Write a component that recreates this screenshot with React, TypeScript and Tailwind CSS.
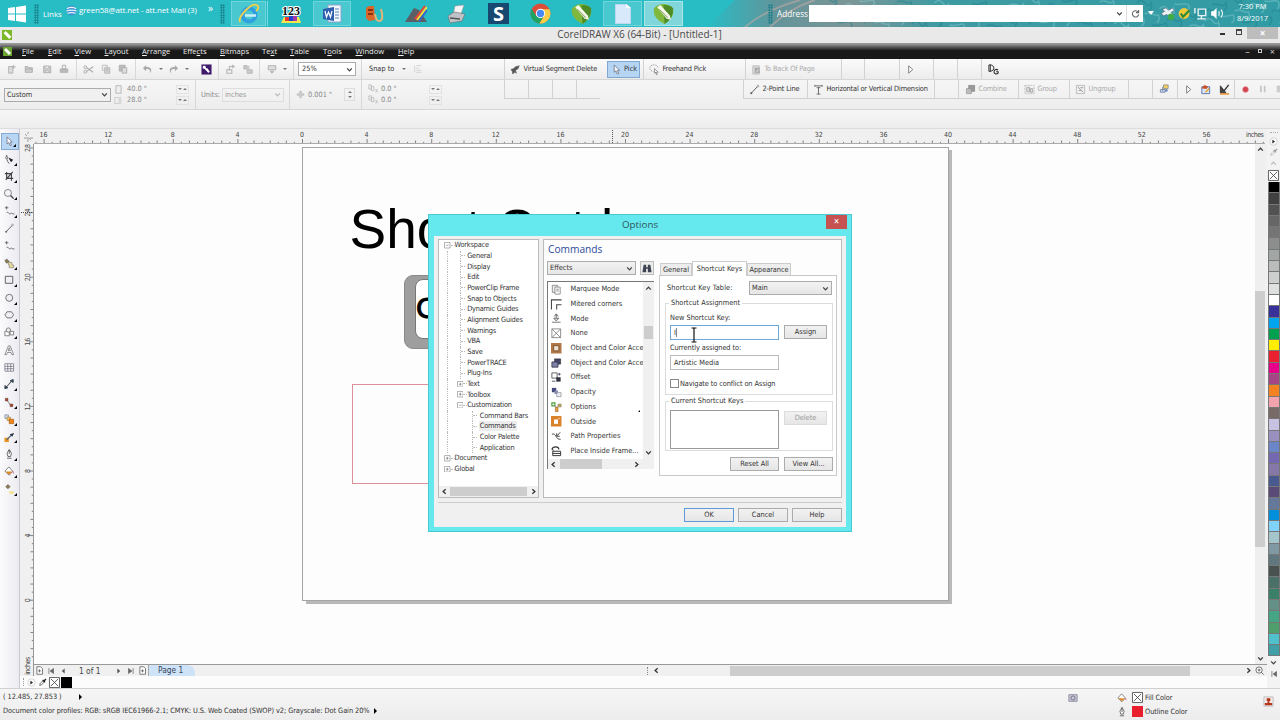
import React from 'react';
import { clsx } from 'clsx';

type Glyphs = Record<string, React.ReactNode>;

const gray = '#a9a9a9';

// All glyphs share a 12x12 box
const glyphs: Glyphs = {
  new: <><path d="M2 3h5v8H2z" fill="#ddd" stroke={gray} /><path d="M8 1v5M5.500 3.500h5" stroke={gray} /></>,
  open: <path d="M1.500 10V3h3l1 1.500H10V10zM2 6h8" fill="#ccc" stroke={gray} />,
  save: <><path d="M2 2.500h8.500v8H2z" fill="#ccc" stroke={gray} /><path d="M4 2.500h4v3H4zM4 8h4v2H4z" fill="#eee" stroke="#bbb" /></>,
  print: <><path d="M4 1.500h4V6H4z" fill="#eee" stroke={gray} /><path d="M1.500 6h9v4h-9z" fill="#bbb" stroke={gray} /></>,
  cut: <><path d="M4 4l7 5M4 8l7-5" stroke={gray} strokeWidth="1.200" /><circle cx="2.500" cy="3.500" r="1.600" fill="none" stroke={gray} /><circle cx="2.500" cy="8.500" r="1.600" fill="none" stroke={gray} /></>,
  copy: <><path d="M1.500 1.500h6v6h-6z" fill="#eee" stroke="#bbb" /><path d="M4.500 4.500h6v6.500h-6zM6 6.500h3M6 8.500h3" fill="#ddd" stroke={gray} /></>,
  paste: <><path d="M1.500 1.500h7v7h-7z" fill="#bbb" stroke={gray} /><path d="M5 4.500h5.500V11H5z" fill="#ddd" stroke={gray} /></>,
  undo: <path d="M4.500 1L1 4.500 4.500 8V5.500c3-.5 5 .5 4 4.500 3.500-4 1-7-4-6.800z" fill="#aaa" />,
  redo: <path d="M7.500 1L11 4.500 7.500 8V5.500c-3-.5-5 .5-4 4.500C0 6 2.500 3 7.500 3.200z" fill="#aaa" />,
  connect: <><path d="M.5.500h11v11H.5z" fill="#3f1a6b" /><path d="M3 3l5.500 6M6 5l3 4" stroke="#fff" strokeWidth="1.800" /><path d="M2 2h3v3H2z" fill="#fff" /></>,
  import: <path d="M1 7h6v4H1zM4 7V3h5M7 1l3 2-3 2" fill="none" stroke="#b5b5b5" strokeWidth="1.300" />,
  export: <path d="M5 7h6v4H5zM1 2h4v4H1zM7 6V2" fill="#ccc" stroke="#b5b5b5" strokeWidth="1.200" />,
  publish: <path d="M1.500 2h9v5h-9zM6 7v4M3.500 8.500L6 11l2.500-2.500" fill="#ddd" stroke={gray} />,
  lines: <path d="M2 2v8M4 2h6M4 5h3M4 7.500h6M4 10h6" stroke="#ccc" />,
  vsd: <path d="M1 6l3-1 2-2 4-1-1 3-3 2 1 3-2-1-2 2-.5-3zM7 5l3-3" fill="#555" stroke="#666" strokeWidth=".7" />,
  pick: <path d="M3.500 1l6 6H7l1.500 3.500-1.500.5L5.500 7.500 3.500 9z" fill="#f5f8fc" stroke="#667" strokeWidth=".8" />,
  freehand: <><path d="M6 5l4 4H8l1 2.500H8L7 9l-1 1z" fill="#fff" stroke="#666" strokeWidth=".7" /><path d="M1 4c0-4 8-4 9 0M1 5c0 2 2 3 4 3" fill="none" stroke="#999" strokeDasharray="1.500 1" /></>,
  back: <><path d="M2 2h7v9H2z" fill="#ddd" stroke="#bbb" /><path d="M4 4h5.500v6H4z" fill="#aaa" /><path d="M6 9l2-3" stroke="#eee" /></>,
  play: <path d="M4 2l4.500 4L4 10z" fill="#fff" stroke="#777" />,
  dg: <><path d="M1 1h2.500q3 1 3 3.500T3 8H1zM2.500 1v7" fill="none" stroke="#222" /><path d="M11 6.500q-3-1.500-4 .5t0 3q2 2 4 0V8.500H9" fill="none" stroke="#222" strokeWidth="1.100" /></>,
  twopoint: <><path d="M3 9.500L9.500 2.500" stroke="#555" /><circle cx="2.500" cy="10" r="1.200" fill="#666" /><circle cx="9.700" cy="2.300" r="1" fill="#fff" stroke="#777" strokeWidth=".7" /></>,
  dim: <path d="M2 2h8M2 1v2M10 1v2M6 3.500V11M4 11h4M4 4h4" fill="none" stroke="#666" />,
  combine: <><path d="M4 1.500h6.500V8H4z" fill="#999" stroke="#777" strokeWidth=".6" /><path d="M1.500 5h5.500v5.500H1.500z" fill="#bbb" stroke="#888" strokeWidth=".6" /></>,
  group: <><path d="M1 1.500h10v9H1z" fill="none" stroke="#bbb" strokeDasharray="2 1" /><path d="M3 3.500h3v5H3zM7 5h2.500v4H7z" fill="#ddd" stroke="#aaa" /></>,
  ungroup: <><path d="M1.500 1.500h9v9h-9z" fill="#eee" stroke="#bbb" /><path d="M3 3l3 3M6 6l3 3M4 7h3M6 4h3" stroke="#999" /></>,
  width: <path d="M1 2h6v8H1zM9 1v10" fill="#eee" stroke="#c4c4c4" />,
  page: <path d="M2.500 1h7v10h-7z" fill="#eee" stroke="#aaa" />,
  nudge: <path d="M6 1L4.500 3h3zM6 11L4.500 9h3zM1 6l2-1.500v3zM11 6L9 4.500v3zM4.500 4.500h3v3h-3z" fill="#ddd" stroke="#aaa" strokeWidth=".8" />,
  dup: <path d="M1 1h3v5H1zM4 3h3v5H4zM9 6l2.500 4M11.500 6L9 10" fill="none" stroke="#bbb" />,
  wizard: <><path d="M5 1h5v4H5z" fill="#f0d060" stroke="#777" strokeWidth=".7" /><path d="M4 3v5M1.500 6h5v3h-5z" fill="#cfdcf4" stroke="#7889a8" /><circle cx="8" cy="7" r="1.500" fill="#6a8ac0" /></>,
  script: <><path d="M2 3h8.500v7.500H2z" fill="#dce6f8" stroke="#5672a8" /><path d="M1.500 4.500L5 1l4 2-2 2.500z" fill="#c85028" /><path d="M6 9l4-4" stroke="#e7a32b" strokeWidth="1.500" /></>,
  vba: <><path d="M1.500 2v7.500h6z" fill="#444" stroke="#333" /><path d="M10.500 1L5.500 7.500" stroke="#333" strokeWidth="1.500" /><path d="M1 10.800h10" stroke="#e88b22" strokeWidth="1.600" /></>,
  rec: <circle cx="6" cy="6" r="3.200" fill="#d2434f" stroke="#e9a5a8" strokeWidth=".6" />,
  pause: <path d="M3.500 2v8M8 2v8" stroke="#c4c4c4" strokeWidth="2" />,
  stop: <path d="M2 2h8v8H2z" fill="#ccc" />,
  // toolbox
  shape: <><path d="M3 1c0 4 0 7 3 10" fill="none" stroke="#555" /><path d="M5 4l5.500 2.500-2.500 3z" fill="#222" /><path d="M2 3h2v2H2z" fill="#fff" stroke="#555" strokeWidth=".7" /></>,
  crop: <path d="M3 1v7.500h7.500M1 3h7.500v8M2 10L10 1" fill="none" stroke="#444" strokeWidth="1.300" />,
  zoom: <><circle cx="4.500" cy="4.500" r="4" fill="#f4f4f6" stroke="#777" /><path d="M7.500 7.500L11 11" stroke="#444" strokeWidth="1.600" /></>,
  curve: <path d="M3 0v4M1 2h4M3 8c2-3.500 3 4 5 0 1-1 1 2 4 1" fill="none" stroke="#666" />,
  smart: <><path d="M1 3l2-2 3 3-3 2z" fill="#8a7a56" stroke="#554" strokeWidth=".7" /><path d="M5 5h4v3h2v3H6V8H5z" fill="#ead9a0" stroke="#776" strokeWidth=".7" /></>,
  rect: <path d="M1.500 1.500h8.500v8H1.500z" fill="#eef0f3" stroke="#555" />,
  ellipse: <circle cx="6" cy="5.500" r="4" fill="#eef0f3" stroke="#666" />,
  polygon: <path d="M3.500 2h5l2.500 3.500L8.500 9h-5L1 5.500z" fill="#eef0f3" stroke="#666" />,
  shapes: <><path d="M1 5h5v5H1z" fill="#fff" stroke="#777" /><circle cx="5" cy="3.500" r="2.500" fill="#eee" stroke="#777" /><path d="M7 5h4v4H7z" fill="#fff" stroke="#777" /></>,
  type: <path d="M1 11L5 1h2l4 10H9L8 8.500H4L3 11zM4.700 6.500h2.600L6 3z" fill="#fff" stroke="#666" strokeWidth=".8" />,
  table: <path d="M1 2h10v8.500H1zM1 5h10M1 7.700h10M4.300 2v8.500M7.700 2v8.500" fill="#fff" stroke="#667" strokeWidth=".8" />,
  measure: <><path d="M2 10l7-8" stroke="#555" strokeWidth="1.200" /><path d="M1 7.500l3.500 2.500L1 11zM7 2l3.500-1.500L10.500 4z" fill="#345" stroke="#345" /></>,
  connector: <><path d="M3 3l5 7" stroke="#777" /><path d="M1.500 1.500h3v3h-3zM7 8h3v3H7z" fill="#a04a2a" stroke="#633" strokeWidth=".5" /></>,
  blend: <><path d="M1 1h4v4H1z" fill="#cde" stroke="#777" strokeWidth=".7" /><path d="M3.500 3.500h4v4h-4z" fill="#f5b860" stroke="#985" strokeWidth=".7" /><path d="M6 6h5v5H6z" fill="#f08418" stroke="#a50" strokeWidth=".7" /></>,
  dropperbox: <><path d="M.5 6.500h5v5h-5z" fill="#e89420" /><path d="M3 9l5-5" stroke="#567" strokeWidth="1.500" /><path d="M6.500 2.500l3 3L11.500 1z" fill="#234" /></>,
  pen: <path d="M6 .5L3.500 5 4.500 8.500h3L8.500 5zM3.500 10.500h5M6 1v5" fill="#fff" stroke="#444" strokeWidth=".9" />,
  fill: <><path d="M1 6l4.500-5L10 6 6 10.500z" fill="#fff" stroke="#555" strokeWidth=".8" /><path d="M1.500 6.200h8L6 10z" fill="#e08a28" /><path d="M10 6l1 2.500" stroke="#c57" /></>,
  ifill: <><path d="M2 3l2.500-2.500L7 3 4.500 5.500z" fill="#8a7a50" stroke="#554" strokeWidth=".6" /><path d="M6 8.500h5v2.500H6z" fill="#f5e07a" /></>,
  // document
  addpage: <path d="M2.500 1h5l2.500 2.500V11h-7.500zM6 4.500v4M4 6.500h4" fill="#fff" stroke="#555" />,
  first: <path d="M3.500 2.500v7M9 3L5 6l4 3z" fill="#666" stroke="#666" strokeWidth=".9" />,
  prev: <path d="M8 3L4.500 6 8 9z" fill="#555" />,
  next: <path d="M4 3l3.500 3L4 9z" fill="#555" />,
  last: <path d="M8.500 2.500v7M3 3l4 3-4 3z" fill="#666" stroke="#666" strokeWidth=".9" />,
  dropper: <><path d="M1 11l1-3 3.500-3.500 2 2L4 10z" fill="#fff" stroke="#333" /><path d="M5.500 3l3.500 3.500M7.500 4.500l3-3" stroke="#222" strokeWidth="2" /></>,
  none: <path d="M.5.500h11v11H.5zM2 2l8 8M10 2l-8 8" fill="#fff" stroke="#444" strokeWidth=".9" />,
  circleplay: <><circle cx="6" cy="6" r="5" fill="#fafafa" stroke="#ccc" /><path d="M4.500 3.500L8 6 4.500 8.500z" fill="#222" /></>,
  proof: <><path d="M1 2h10v8H1z" fill="#c9c9da" stroke="#889" /><circle cx="6" cy="6" r="2.500" fill="none" stroke="#667" /></>,
  person: <><path d="M1 1h10v10H1z" fill="#f3e9e5" stroke="#bbb" /><path d="M4 2.500h4v3H7v2h3V10H2V7.500h3v-2H4z" fill="#b5381c" /></>,
  // command list
  marquee: <><path d="M1.500 1.500h6v8h-6z" fill="#eee" stroke="#888" /><path d="M4.500 3.500h6v8h-6zM6 6h3M6 8h3" fill="#fff" stroke="#888" /></>,
  miter: <path d="M.5 12V1H12M6.500 12V6.500H12" fill="none" stroke="#444" strokeWidth="1.200" />,
  mode: <path d="M6 1v5M3.500 4L6 1l2.500 3M3 6h6L6 9zM1 10.500h10" fill="#ddd" stroke="#666" />,
  nonex: <path d="M1 1h10v10H1zM1 1l10 10M11 1L1 11" fill="#fff" stroke="#777" strokeWidth=".9" />,
  accel: <><path d="M0 0h12v12H0z" fill="#b07848" /><path d="M3 3h6v6H3z" fill="#eadfd0" stroke="#7a4a22" /></>,
  accel2: <><path d="M4 1h7v6H4z" fill="#44466a" stroke="#222" strokeWidth=".6" /><path d="M1 4.500h7v6H1z" fill="#7d80a8" stroke="#223" strokeWidth=".8" /></>,
  offset: <><path d="M1 1h6v6H1z" fill="#fff" stroke="#555" /><path d="M6 6h5v5H6z" fill="#334" /><path d="M9.500 1v3M8 2.500h3M1 10.500h4" stroke="#446" /></>,
  opacity: <><path d="M1 1h5v5H1z" fill="#44487a" /><path d="M4 4h4v4H4z" fill="#888bb0" /><path d="M6.500 6.500h5v4.500h-5z" fill="#eef" stroke="#888" strokeWidth=".8" /></>,
  options: <><path d="M1 1h3.500v3.500H1z" fill="#fff" stroke="#4a9a3a" strokeWidth="1.300" /><path d="M5 6h3v5H5z" fill="#e8a030" stroke="#964" strokeWidth=".7" /><path d="M8 2.500h3.500v3H8zM4 4.500l3 2" fill="#cbb060" stroke="#875" strokeWidth=".8" /></>,
  outside: <><path d="M0 0h12v12H0z" fill="#d9832b" /><path d="M3.500 4h4.500v5H3.500z" fill="#fff" /><path d="M8 4l2-2" stroke="#fff" /></>,
  pathprops: <path d="M1 3.500h2c3 0 2 6 8 6M10.500 1.500L7 5.500M6.500 2.500v3.500h3.500" fill="none" stroke="#444" strokeWidth="1.100" />,
  inside: <><path d="M2 6h9v5H2zM2 8.500h9" fill="#fff" stroke="#333" strokeWidth="1.100" /><path d="M1 4c1-4 8-4 8 0M3 5l-2-1" fill="none" stroke="#333" strokeWidth="1.200" /></>,
  binoculars: <path d="M2 2h3v3h2V2h3l1.500 9H7V7H5v4H.5z" fill="#3c4250" />,
};

function Icon({ name, className }: { name: string; className?: string }) {
  return (
    <svg viewBox="0 0 12 12" fill="none" className={clsx('shrink-0 overflow-visible', className ?? 'size-[10px]')}>
      {glyphs[name]}
    </svg>
  );
}

function Chevron({ dir = 'down', className }: { dir?: 'down' | 'up' | 'left' | 'right'; className?: string }) {
  const d = { down: 'M1 2l2 2.200L5 2', up: 'M1 4l2-2.200L5 4', left: 'M4 1L1.800 3 4 5', right: 'M2 1l2.200 2L2 5' }[dir];
  return (
    <svg viewBox="0 0 6 6" className={clsx('size-[7px] shrink-0', className ?? 'text-[#444]')}>
      <path d={d} fill="none" stroke="currentColor" strokeWidth="1.100" />
    </svg>
  );
}

function Cell({ icon, className = 'w-[17px]', size }: { icon?: string; className?: string; size?: string }) {
  return (
    <div className={clsx('flex h-full shrink-0 items-center justify-center', className)}>
      {icon && <Icon name={icon} className={size} />}
    </div>
  );
}

function Sep({ className = 'w-[7px]' }: { className?: string }) {
  return (
    <div className={clsx('flex h-full shrink-0 justify-center', className)}>
      <div className="h-full w-px bg-[#d8d8d8]" />
    </div>
  );
}

function Drop({ className = 'w-[9px]' }: { className?: string }) {
  return (
    <div className={clsx('flex shrink-0 items-center justify-center', className)}>
      <div className="border-x-2 border-t-2 border-x-transparent border-t-[#777]" />
    </div>
  );
}

// Toolbar button with a leading separator line
function Tool({ icon, label, className, disabled }: { icon?: string; label?: string; className: string; disabled?: boolean }) {
  return (
    <div className={clsx('flex h-full shrink-0 items-center overflow-hidden border-l border-[#d2d2d2] tracking-[-0.16px] whitespace-nowrap', className, disabled && 'text-[#aaa]')}>
      {icon && <Icon name={icon} className="mr-[2.500px] ml-[5px] size-[11px]" />}
      {label}
    </div>
  );
}

function Select({ value, className, disabled }: { value: string; className: string; disabled?: boolean }) {
  return (
    <div className={clsx('flex shrink-0 items-center justify-between border px-[2px]', disabled ? 'border-[#ddd] text-[#999]' : 'border-[#acacac]', className)}>
      <span>{value}</span>
      <Chevron className={disabled ? 'text-[#bbb]' : 'text-[#444]'} />
    </div>
  );
}

function Spin() {
  return (
    <div className="flex h-[9px] w-[13px] shrink-0 items-center justify-around border border-[#e2e2e2]">
      <div className="border-x-2 border-t-2 border-x-transparent border-t-[#777]" />
      <div className="border-x-2 border-b-2 border-x-transparent border-b-[#777]" />
    </div>
  );
}

function Grip() {
  return <div className="h-[20px] w-[5px] shrink-0 bg-[radial-gradient(circle,#167d88_0.8px,transparent_1px)] bg-[size:2.500px_2.500px]" />;
}

const CorelBadge = () => (
  <svg viewBox="0 0 20 20" className="size-[21px]">
    <path d="M1 5Q10-3 19 5q2 9-8 15Q-1 14 1 5z" fill="#7fb83a" />
    <path d="M10 2q7 0 9 3 1 9-8 15z" fill="#4e8a26" />
    <path d="M4 4l3-2 9 10 1 4-4-1z" fill="#f4f8ea" />
    <path d="M6 6l8 8" stroke="#96ad7c" />
  </svg>
);

function Taskbar() {
  return (
    <header className="relative flex h-[27px] shrink-0 items-center overflow-hidden bg-[#28bcc5] font-['Open_Sans',sans-serif] text-[7.900px] text-white">
      <svg className="absolute inset-0 h-[27px] w-[1280px]" viewBox="0 0 1280 27">
        <defs>
          <linearGradient id="water" x1="0" x2="1">
            <stop offset="0" stopColor="#28bcc5" />
            <stop offset=".12" stopColor="#62949a" />
            <stop offset=".25" stopColor="#7c9697" />
            <stop offset=".4" stopColor="#3f9aa2" />
            <stop offset="1" stopColor="#319ca5" />
          </linearGradient>
        </defs>
        <path d="M735 0H1280V27H707z" fill="url(#water)" />
        <path d="M745 27Q765 10 800 0M770 27Q790 8 815 0" stroke="#bba9a4" strokeWidth="2" fill="none" opacity=".6" />
        {[...Array(62)].map((_, i) => (
          <path
            key={i}
            d={`M${822 + i * 7.500} ${(i * 11) % 27}q4 ${(i % 3) * 3 - 5} 8 0t6 ${(i % 4) - 2}q2 5-2 8`}
            stroke={i % 2 ? '#86cdd0' : '#1b818b'}
            strokeWidth="1.500"
            fill="none"
            opacity=".45"
          />
        ))}
      </svg>
      <div className="relative flex h-full w-full items-center">
        <svg viewBox="0 0 18 17" className="ml-2 size-[18px] shrink-0">
          <path d="M0 2.500L7 1.500V8H0zM8 1.400L18 0v8H8zM0 9h7v6.500l-7-1zM8 9h10v8L8 15.600z" fill="#fff" />
        </svg>
        <div className="ml-[8px]"><Grip /></div>
        <span className="ml-[4px] w-[23px] shrink-0">Links</span>
        <svg viewBox="0 0 12 12" className="mb-[7px] size-[11px] shrink-0">
          <circle cx="6" cy="6" r="5.500" fill="#3a8fd0" />
          <path d="M1 4q5-3 10 0M.5 6.500q5.500-2 11 0M1.500 9q4.500-1.500 9 0" stroke="#e7f5fc" fill="none" strokeWidth="1.300" />
        </svg>
        <span className="mb-[7px] ml-[2px] w-[129px] shrink-0 tracking-[-0.1px] whitespace-nowrap">green58@att.net - att.net Mail (3)</span>
        <span className="mb-[12px] w-[12px] shrink-0 text-[10px]">»</span>
        <Grip />
        <div className="ml-[6px] flex h-[25px] w-[35px] shrink-0 items-center justify-center border border-[#6fd5da] bg-[#4ac8d0]">
          <svg viewBox="0 0 22 22" className="size-[22px]">
            <circle cx="11" cy="12" r="6.500" fill="none" stroke="#2f9fe0" strokeWidth="4" />
            <path d="M7 12.500h11" stroke="#c9effc" strokeWidth="2.500" />
            <path d="M2 19Q0 15 8 7T20 3q1 3-2 5" fill="none" stroke="#f3cf4a" strokeWidth="1.800" />
          </svg>
        </div>
        <div className="ml-[1px] h-[25px] w-px shrink-0 bg-[#7fdadf]" />
        <svg viewBox="0 0 22 20" className="ml-[12px] h-[20px] w-[22px] shrink-0">
          <path d="M1 19L4 13h15l2 6z" fill="#f2e84b" />
          <path d="M5 13h4v4H5z" fill="#e33" /><path d="M9 11h4v6H9z" fill="#24c" /><path d="M13 12h4v5h-4z" fill="#a13aa8" />
          <text x="11" y="11" textAnchor="middle" fontSize="12" fontWeight="700" fill="#111" stroke="#fff" strokeWidth="2" paintOrder="stroke" fontFamily="Liberation Serif">123</text>
        </svg>
        <div className="ml-[11px] flex h-[25px] w-[38px] shrink-0 items-center justify-center border border-[#6fd5da] bg-[#4ac8d0]">
          <svg viewBox="0 0 20 20" className="size-[20px]">
            <path d="M6 1h13v17H6z" fill="#f4f7fc" stroke="#8aa4cc" />
            <path d="M1 5l11-2v14L1 15z" fill="#2d5fae" />
            <path d="M3 7l1.500 6L6.500 8l2 5L10 7" stroke="#fff" fill="none" strokeWidth="1.200" />
            <path d="M13 5h4M13 8h4M13 11h4M13 14h4" stroke="#5b82c0" />
          </svg>
        </div>
        <svg viewBox="0 0 20 20" className="ml-[13px] size-[20px] shrink-0">
          <path d="M2 4l3-2h5l1 14-6 1-3-3z" fill="#d9672a" /><path d="M4 6h5M4 10h5" stroke="#8a2e14" strokeWidth="2" />
          <path d="M11 10q1 8 5 7t1-12" stroke="#e0b678" strokeWidth="2" fill="none" />
        </svg>
        <svg viewBox="0 0 22 20" className="ml-[21px] h-[20px] w-[22px] shrink-0">
          <path d="M0 18L9 4l5 2 8 12z" fill="#5c5f66" />
          <path d="M10 15L20 2" stroke="#e43" strokeWidth="2" /><path d="M12 16L22 3" stroke="#fd3" strokeWidth="2" /><path d="M14 17l8-11" stroke="#36c" strokeWidth="2" />
        </svg>
        <svg viewBox="0 0 20 20" className="ml-[20px] size-[20px] shrink-0">
          <path d="M8 2l9-1-3 9-8 1z" fill="#f5f5f5" stroke="#999" strokeWidth=".6" /><path d="M1 12l6-4 11 2-3 7-12 2z" fill="#bfc3c7" stroke="#666" strokeWidth=".6" /><path d="M3 14l10 1" stroke="#555" strokeWidth="1.500" />
        </svg>
        <div className="ml-[21px] flex size-[21px] shrink-0 items-center justify-center bg-[#17486f] text-[20px] leading-none font-bold">S</div>
        <svg viewBox="0 0 20 20" className="ml-[21px] size-[21px] shrink-0">
          <circle cx="10" cy="10" r="9.500" fill="#dd4b39" />
          <path d="M1.700 5.500A9.500 9.500 0 0 0 9 19.500l5-8-4-1-4 2z" fill="#1da462" />
          <path d="M9 19.500A9.500 9.500 0 0 0 18.500 6H10l4 5.500z" fill="#ffcd46" />
          <circle cx="10" cy="10" r="4.500" fill="#fff" /><circle cx="10" cy="10" r="3.500" fill="#4a8af4" />
        </svg>
        <div className="ml-[20px] w-[21px] shrink-0"><CorelBadge /></div>
        <div className="ml-[11px] flex h-[25px] w-[39px] shrink-0 items-center justify-center border border-[#6fd5da] bg-[#4ac8d0]">
          <svg viewBox="0 0 16 20" className="h-[20px] w-[16px]"><path d="M0 0h11l5 4v16H0z" fill="#d7e9fa" stroke="#a5c6e6" /><path d="M11 0v4h5" fill="#fff" /></svg>
        </div>
        <div className="ml-[2px] flex h-[25px] w-[39px] shrink-0 items-center justify-center border border-[#a9e6e8] bg-[#80d6da]"><CorelBadge /></div>
        <div className="ml-[85px]"><Grip /></div>
        <span className="ml-[4px] w-[32px] shrink-0 text-[8.200px]">Address</span>
        <div className="flex h-[17px] w-[334px] shrink-0 items-center justify-end bg-white">
          <Chevron className="mr-[3px] text-[#444]" />
          <div className="flex h-full w-[17px] items-center justify-center border-l border-[#ddd]">
            <svg viewBox="0 0 10 10" className="size-[9px]"><path d="M8 3.500A3.500 3.500 0 1 0 8.500 6M8.500 1v3h-3" fill="none" stroke="#666" strokeWidth="1.200" /></svg>
          </div>
        </div>
        <div className="mb-[2px] ml-[5px] shrink-0 border-x-[3px] border-t-4 border-x-transparent border-t-white" />
        <svg viewBox="0 0 64 12" className="ml-[7px] h-[13px] w-[70px] shrink-0">
          <path d="M1 2l3-1 3 2 3-2 2 2-3 2 2 2-3 2-3-2-3 1-2-2 3-2z" fill="#e9f3f5" stroke="#557" strokeWidth=".5" /><circle cx="9" cy="9" r="3" fill="#3fae4a" />
          <circle cx="21" cy="6" r="5" fill="#f0c93a" /><path d="M18 6l2 3 6-6" stroke="#2f8a38" strokeWidth="2" fill="none" />
          <path d="M34 2h7v6h-7zM37 8v3M33 11h8M31 1v5" stroke="#e9f3f5" strokeWidth="1.300" fill="none" />
          <path d="M46 4h2l3-3v10l-3-3h-2z" fill="#fff" /><path d="M53 4q1 2 0 4M55 2.500q3 3.500 0 7" stroke="#fff" fill="none" />
        </svg>
        <div className="mb-[2px] w-[43px] shrink-0 text-center text-[7.500px] leading-[11.500px]">7:30 PM<br />8/9/2017</div>
      </div>
    </header>
  );
}

function TitleBar() {
  return (
    <div className="flex h-[16px] shrink-0 items-center bg-[#e9e9e9] font-['Open_Sans',sans-serif] text-[#4a4a4a]">
      <div className="ml-[2px] flex size-[10px] items-center justify-center bg-[#7cb928]"><div className="h-[8px] w-[3px] -rotate-45 bg-white" /></div>
      <div className="mb-[2px] ml-[8px] flex-1 text-center text-[10px]"><span className="pl-[45px]">CorelDRAW X6 (64-Bit) - [Untitled-1]</span></div>
      <div className="flex h-full w-[66px] shrink-0">
        <div className="flex w-[16px] justify-center pt-[6px]"><div className="h-[2px] w-[5px] bg-[#333]" /></div>
        <div className="flex w-[17px] justify-center pt-[2px]"><div className="size-[6px] border border-t-2 border-[#444]" /></div>
        <div className="flex h-[12px] w-[31px] items-center justify-center bg-[#bdbdbd] text-[10px] font-bold text-white">×</div>
      </div>
    </div>
  );
}

const menus: [string, string, string, string][] = [
  ['', 'F', 'ile', 'w-[26px]'],
  ['', 'E', 'dit', 'w-[26.500px]'],
  ['', 'V', 'iew', 'w-[30px]'],
  ['', 'L', 'ayout', 'w-[37.500px]'],
  ['', 'A', 'rrange', 'w-[41px]'],
  ['Effe', 'c', 'ts', 'w-[37px]'],
  ['', 'B', 'itmaps', 'w-[42px]'],
  ['Te', 'x', 't', 'w-[28px]'],
  ['', 'T', 'able', 'w-[33px]'],
  ['T', 'o', 'ols', 'w-[32.500px]'],
  ['', 'W', 'indow', 'w-[42.500px]'],
  ['', 'H', 'elp', 'w-[30px]'],
];

function MenuBar() {
  return (
    <nav className="flex h-[16px] shrink-0 items-center border-t border-[#999] bg-linear-to-b from-[#999] via-[#191919] via-45% to-[#191919] font-['Open_Sans',sans-serif] text-[7.600px] text-[#eee]">
      <div className="ml-[3px] flex size-[9px] items-center justify-center bg-[#6ba531]"><div className="h-[7px] w-[3px] -rotate-45 bg-white" /></div>
      <div className="-mt-px ml-[10px] flex flex-1">
        {menus.map(([a, b, c, w]) => (
          <span key={a + b + c} className={clsx('shrink-0', w)}>{a}<u>{b}</u>{c}</span>
        ))}
      </div>
      <div className="mr-[5px] flex gap-[8px] text-[9px] leading-none text-[#ccc]"><span>–</span><div className="mt-[2px] size-[4px] border border-[#ccc]" /><span>×</span></div>
    </nav>
  );
}

function StandardBar() {
  return (
    <div className="flex h-[21px] shrink-0 items-center border-b border-[#d6d6d6] bg-linear-to-b from-[#fbfbfb] to-[#ececec] pl-[3px]">
      <Cell icon="new" /><Cell icon="open" className="w-[18px]" /><Cell icon="save" /><Cell icon="print" className="w-[18px]" /><Sep />
      <Cell icon="cut" size="size-[11px]" /><Cell icon="copy" /><Cell icon="paste" /><Sep className="w-[8px]" />
      <Cell icon="undo" size="size-[11px]" /><Drop /><Cell icon="redo" size="size-[11px]" /><Drop /><Cell className="w-[7px]" />
      <Cell icon="connect" size="size-[11px]" /><Sep />
      <Cell icon="import" /><Cell icon="export" /><Sep />
      <Cell icon="publish" /><Drop /><Sep className="w-[9px]" />
      <Select value="25%" className="h-[14px] w-[58px] bg-white pl-[3px]" /><Sep className="w-[10px]" />
      <span className="w-[33px] shrink-0 pl-[3px]">Snap to</span><Drop className="w-[10px]" /><Cell icon="lines" />
      <Cell className="w-[78px]" />
      <Tool icon="vsd" label="Virtual Segment Delete" className="w-[100px]" />
      <div className="ml-[3px] flex h-[17px] w-[33px] shrink-0 items-center border border-[#7fa7d0] bg-[#b6d5f3]"><Icon name="pick" className="mr-[2px] ml-[3px] size-[11px]" />Pick</div>
      <Tool icon="freehand" label="Freehand Pick" className="ml-[3px] w-[102px]" />
      <Tool icon="back" label="To Back Of Page" className="w-[96px]" disabled />
      <Tool className="w-[23px]" /><Tool className="w-[35px]" />
      <Tool icon="play" className="w-[34px]" /><Tool className="w-[24px]" /><Tool className="w-[24px]" />
      <Tool icon="dg" className="w-[30px] pl-px" />
    </div>
  );
}

function PropertyBar() {
  return (
    <div className="flex h-[30px] shrink-0 border-b border-[#d6d6d6] bg-linear-to-b from-[#f6f6f6] to-[#ededed] text-[#888]">
      <div className="flex h-[29px] w-[504px] shrink-0 items-center">
        <Select value="Custom" className="ml-[4px] h-[14px] w-[107px] bg-[#f0f0f0] text-[#333]" />
        <div className="ml-[3px] flex flex-col gap-[2px]">
          {['40.0 "', '28.0 "'].map((v, i) => (
            <div key={v} className="flex h-[9px] items-center"><Icon name={i ? 'width' : 'page'} className="size-[9px]" /><span className="ml-[4px] w-[49px]">{v}</span><Spin /></div>
          ))}
        </div>
        <Sep className="w-[12px]" />
        <span className="w-[21px] shrink-0">Units:</span>
        <Select value="inches" className="h-[14px] w-[62px]" disabled />
        <Sep className="w-[11px]" />
        <Icon name="nudge" className="mr-[3px] ml-[1px] size-[9px]" />
        <span className="w-[36px] shrink-0">0.001 "</span>
        <div className="flex h-[13px] w-[11px] shrink-0 flex-col items-center justify-around border border-[#ddd]">
          <div className="border-x-2 border-b-2 border-x-transparent border-b-[#777]" /><div className="border-x-2 border-t-2 border-x-transparent border-t-[#777]" />
        </div>
        <Sep className="w-[13px]" />
        <div className="flex flex-col gap-[2px]">
          {[0, 1].map((i) => (
            <div key={i} className="flex h-[9px] items-center"><Icon name="dup" className="size-[10px]" /><span className="ml-[3px] w-[48px]">0.0 "</span><Spin /></div>
          ))}
        </div>
      </div>
      <div className="mr-[143px] flex h-[19px] w-[96px] shrink-0 border-b border-[#d0d0d0]">
        <Tool className="w-[24px]" /><Tool className="w-[24px]" /><Tool className="w-[24px]" /><Tool className="w-[24px]" />
      </div>
      <div className="flex h-[19px] w-[537px] shrink-0 overflow-hidden border-b border-[#d0d0d0] text-[#333]">
        <Tool icon="twopoint" label="2-Point Line" className="w-[64px]" />
        <Tool icon="dim" label="Horizontal or Vertical Dimension" className="w-[127px]" />
        <Tool className="w-[24px]" />
        <Tool icon="combine" label="Combine" className="w-[60px] pl-px" disabled />
        <Tool icon="group" label="Group" className="w-[51px]" disabled />
        <Tool icon="ungroup" label="Ungroup" className="w-[59px]" disabled />
        <Tool className="w-[24px]" />
        <Tool icon="wizard" className="w-[25px] pl-px" />
        <Tool icon="play" className="w-[20px]" />
        <Cell icon="script" size="size-[11px]" /><Cell icon="vba" size="size-[11px]" className="w-[20px]" />
        <Tool icon="rec" className="w-[20px]" />
        <Cell icon="pause" /><Cell icon="stop" />
      </div>
    </div>
  );
}

const tools = ['pick', 'shape', 'crop', 'zoom', 'curve', 'twopoint', 'curve', 'smart', 'rect', 'ellipse', 'polygon', 'shapes', 'type', 'table', 'measure', 'connector', 'blend', 'dropperbox', 'pen', 'fill', 'ifill'];
const noFlyout = [5, 6, 12, 13];

function Toolbox() {
  return (
    <aside className="flex w-[20px] shrink-0 flex-col border-r border-[#c9c9d3] bg-linear-to-r from-[#fbfbfd] to-[#ebebf1] pt-[4px]">
      {tools.map((t, i) => (
        <div key={i} className={clsx('relative ml-[1px] flex h-[17.360px] w-[18px] shrink-0 items-center justify-center', i === 0 && 'border border-[#86acd4] bg-[#b8d6f3]')}>
          <Icon name={t} className="mr-px size-[10.500px]" />
          {!noFlyout.includes(i) && <div className="absolute right-[2px] bottom-[2px] border-b-[3px] border-l-[3px] border-b-black border-l-transparent" />}
        </div>
      ))}
    </aside>
  );
}

const inch = 16.15;

function HorizontalRuler() {
  return (
    <svg className="block h-[15px] w-[1247px] shrink-0 bg-[#f0f0f0] font-['DejaVu_Sans_Condensed','Noto_Sans',sans-serif] text-[7px]" viewBox="20 129 1247 15">
      <path d="M25 134l2 2m2 2l2 2M28 132v2m0 3v5M24 138h3m3 0h3" stroke="#888" strokeWidth=".8" />
      {[...Array(153)].map((_, i) => {
        const x = 302.5 + (i - 33) * (inch / 2);
        const len = (i - 33) % 8 === 0 ? 4 : (i - 33) % 2 === 0 ? 2.5 : 1.2;
        return x > 34 && x < 1265 && <path key={i} d={`M${x} ${143 - len}V143`} stroke="#777" strokeWidth=".9" />;
      })}
      {[...Array(19)].map((_, i) => (
        <text key={i} x={302 + (i - 4) * inch * 4} y="136.500" textAnchor="middle" fill="#444">{Math.abs(i - 4) * 4}</text>
      ))}
      <text x="1246" y="136.500" fill="#444" letterSpacing="-.5">inches</text>
      <path d="M34 143.500H1265" stroke="#aaa" />
      <path d="M612.500 130v13" stroke="#555" strokeDasharray="1 1" />
    </svg>
  );
}

function VerticalRuler() {
  return (
    <svg className="block h-[532px] w-[14px] shrink-0 bg-[#f0f0f0] font-['DejaVu_Sans_Condensed','Noto_Sans',sans-serif] text-[7px]" viewBox="20 144 14 532">
      {[...Array(65)].map((_, i) => {
        const y = 148 + i * (inch / 2);
        const len = i % 8 === 0 ? 4 : i % 2 === 0 ? 2.5 : 1.2;
        return y < 664 && <path key={i} d={`M${33 - len} ${y}H33`} stroke="#777" strokeWidth=".9" />;
      })}
      {[28, 24, 20, 16, 12, 8, 4, 0].map((n, i) => (
        <text key={n} textAnchor="middle" fill="#444" transform={`translate(30 ${148 + i * inch * 4}) rotate(-90)`}>{n}</text>
      ))}
      <text fill="#444" textAnchor="middle" letterSpacing="-.5" transform="translate(30 666) rotate(-90)">inches</text>
      <path d="M33.500 144V676" stroke="#999" />
      <path d="M21 212.500h12" stroke="#444" strokeDasharray="1 1" />
    </svg>
  );
}

function Canvas() {
  return (
    <div className="relative h-[520px] w-[1221px] shrink-0 overflow-hidden bg-[#fdfdfd]">
      <div className="absolute top-[6px] left-[272px] h-[454px] w-[646px] bg-[#b9b9b9]" />
      <div className="absolute top-[3px] left-[268px] h-[454px] w-[647px] border border-[#a5a5a5] bg-[#fdfdfd]" />
      <div className="absolute top-[54px] left-[315.500px] font-['Liberation_Sans',sans-serif] text-[55px] leading-[62px] whitespace-nowrap text-black">
        Short C<span className="ml-[4px]">ut k</span>
      </div>
      <div className="absolute top-[131px] left-[370px] h-[74px] w-[90px] rounded-[9px] border border-[#8a8a8a] bg-[#9e9e9e]">
        <div className="absolute top-[3px] left-[10px] h-[60px] w-[70px] rounded-[8px] border border-[#777] bg-white pt-[13px] font-['Liberation_Sans',sans-serif] text-[30px] leading-[30px] text-black [-webkit-text-stroke:1px_black]">Ctrl</div>
      </div>
      <div className="absolute top-[240px] left-[317.500px] h-[100px] w-[200px] border border-[#dc8f98]" />
    </div>
  );
}

function PageNav() {
  return (
    <div className="flex h-[12px] items-center border-t border-[#999] bg-[#f0f0f0] text-[8.300px] text-[#444]">
      <Cell icon="addpage" className="w-[11px]" size="size-[9px]" /><Cell icon="first" className="w-[12px]" /><Cell icon="prev" className="w-[11px]" />
      <span className="w-[45px] pl-[11px] whitespace-nowrap">1 of 1</span>
      <Cell icon="next" className="w-[12px]" /><Cell icon="last" className="w-[11px]" /><Cell icon="addpage" className="w-[12px]" size="size-[9px]" />
      <div className="h-full w-[47px] rounded-tr-[8px] border-l border-[#aaa] bg-[#cfe3f8] pl-[9px] leading-[11px] whitespace-nowrap text-[#345]">Page 1</div>
      <div className="ml-auto flex h-full w-[620px] items-center">
        <div className="h-[8px] w-[3px] border-l border-dotted border-[#888]" />
        <Chevron dir="left" className="ml-[3px] text-[#333]" />
        <div className="ml-[70px] h-[10px] w-[460px] shrink-0 bg-[#cdcdcd]" />
        <Chevron dir="right" className="ml-[55px] text-[#333]" />
        <svg viewBox="0 0 10 10" className="ml-[3px] size-[9px]"><circle cx="4.500" cy="4.500" r="3.500" fill="#fff" stroke="#666" /><path d="M3 4.500h3M4.500 3v3M7 7l2.500 2.500" stroke="#555" /></svg>
      </div>
    </div>
  );
}

const palette = [
  'bg-[#000000]', 'bg-[#404040]', 'bg-[#525252]', 'bg-[#666666]', 'bg-[#757575]', 'bg-[#8c8d8d]', 'bg-[#a2a6a5]', 'bg-[#babcbb]', 'bg-[#cdcfce]', 'bg-[#dfe1e0]', 'bg-[#ffffff]',
  'bg-[#39319a]', 'bg-[#00a5f0]', 'bg-[#00a04e]', 'bg-[#ffee00]', 'bg-[#ea2030]', 'bg-[#e6008a]', 'bg-[#a64585]', 'bg-[#f58220]', 'bg-[#f2a3ab]', 'bg-[#786a66]',
  'bg-[#c8c2e2]', 'bg-[#9a90c0]', 'bg-[#6a85c8]', 'bg-[#7468b0]', 'bg-[#8578a8]', 'bg-[#485a90]', 'bg-[#5a4a78]', 'bg-[#66789a]', 'bg-[#008fdc]', 'bg-[#80d2f8]',
  'bg-[#a5c5cc]', 'bg-[#8098a2]', 'bg-[#60777f]', 'bg-[#485050]', 'bg-[#4a7068]', 'bg-[#3a8068]', 'bg-[#659088]', 'bg-[#45a585]', 'bg-[#4f9f6c]', 'bg-[#50c0cc]', 'bg-[#3fa0a8]',
];

function Palette() {
  return (
    <aside className="flex w-[13px] shrink-0 flex-col items-center bg-[#f3f3f3] pt-[3px]">
      <div className="h-[3px] w-[8px] border-t border-dotted border-[#aaa]" />
      <Icon name="circleplay" className="mt-[2px] size-[9px]" />
      <Icon name="dropper" className="mt-[2px] size-[8px] opacity-40" />
      <Chevron dir="up" className="mt-[4px] text-[#bbb]" />
      <Icon name="none" className="mt-[3px] mb-[1px] size-[11px]" />
      {palette.map((c) => (
        <div key={c} className={clsx('h-[11.300px] w-[12px] shrink-0 border-x border-b border-[#777]', c)} />
      ))}
      <Chevron className="mt-[3px] text-[#444]" />
      <Icon name="first" className="mt-[3px] size-[10px]" />
    </aside>
  );
}

function Workspace() {
  return (
    <main className="flex h-[560px] shrink-0 border-t border-[#dcdcdc]">
      <Toolbox />
      <div className="flex w-[1247px] shrink-0 flex-col">
        <HorizontalRuler />
        <div className="flex h-[532px] shrink-0">
          <VerticalRuler />
          <div className="flex w-[1233px] flex-col">
            <div className="flex h-[520px]">
              <Canvas />
              <div className="flex w-[10px] flex-col items-center bg-[#efefef] pt-[2px]">
                <Chevron dir="up" className="text-[#333]" />
                <div className="mt-[138px] h-[256px] w-full bg-[#cdcdcd]" />
                <Chevron className="mt-auto mb-[2px] text-[#333]" />
              </div>
            </div>
            <PageNav />
          </div>
        </div>
        <div className="flex h-[12px] shrink-0 items-center bg-[#fcfcfc] pl-[3px]">
          <div className="h-[8px] w-[3px] border-l border-dotted border-[#999]" />
          <Icon name="circleplay" className="ml-[1px] size-[9px]" />
          <Icon name="dropper" className="ml-[3px] size-[8px]" />
          <Icon name="none" className="ml-[2px] size-[11px]" />
          <div className="ml-[1px] size-[11px] bg-black" />
        </div>
      </div>
      <Palette />
    </main>
  );
}

function StatusBar() {
  return (
    <footer className="flex h-[32px] shrink-0 border-t border-[#d0d0d0] bg-linear-to-b from-[#f6f6f6] to-[#ececec] tracking-[-0.06px] text-[#333]">
      <div className="flex w-[1068px] flex-col pt-[1px] pl-[3px] leading-[14px]">
        <div className="flex items-center"><span className="w-[76px]">( 12.485, 27.853 )</span><div className="border-y-[3px] border-l-[3px] border-y-transparent border-l-black" /></div>
        <div className="flex items-center gap-[4px]"><span>Document color profiles: RGB: sRGB IEC61966-2.1; CMYK: U.S. Web Coated (SWOP) v2; Grayscale: Dot Gain 20%</span><div className="border-y-[3px] border-l-[3px] border-y-transparent border-l-black" /></div>
      </div>
      <Icon name="proof" className="mt-[4px] size-[10px]" />
      <div className="ml-[39px] flex flex-col gap-[3px] pt-[3px]">
        <div className="flex h-[11px] items-center"><Icon name="fill" /><Icon name="none" className="mr-[2px] ml-[5px] size-[11px]" />Fill Color</div>
        <div className="flex h-[11px] items-center"><Icon name="pen" /><div className="mr-[2px] ml-[5px] size-[11px] bg-[#e91f2e]" />Outline Color</div>
      </div>
      <Icon name="person" className="mt-[7px] mr-[6px] ml-auto size-[11px]" />
    </footer>
  );
}

type Node = { label: string; level: number; box?: '+' | '-'; selected?: boolean };

const tree: Node[] = [
  { label: 'Workspace', level: 0, box: '-' },
  ...['General', 'Display', 'Edit', 'PowerClip Frame', 'Snap to Objects', 'Dynamic Guides', 'Alignment Guides', 'Warnings', 'VBA', 'Save', 'PowerTRACE', 'Plug-Ins'].map((label) => ({ label, level: 1 })),
  { label: 'Text', level: 1, box: '+' },
  { label: 'Toolbox', level: 1, box: '+' },
  { label: 'Customization', level: 1, box: '-' },
  { label: 'Command Bars', level: 2 },
  { label: 'Commands', level: 2, selected: true },
  { label: 'Color Palette', level: 2 },
  { label: 'Application', level: 2 },
  { label: 'Document', level: 0, box: '+' },
  { label: 'Global', level: 0, box: '+' },
];

function TreeRow({ node }: { node: Node }) {
  const guide = 'flex h-full w-[12.600px] shrink-0 items-center';
  return (
    <div className="flex h-[10.670px] items-center tracking-[-0.2px] whitespace-nowrap">
      {[...Array(node.level)].map((_, i) => (
        <div key={i} className={guide}>
          {!(node.level === 2 && i === 1) && <div className="ml-[3px] h-full border-l border-dotted border-[#bbb]" />}
        </div>
      ))}
      <div className={guide}>
        {node.box ? (
          <svg viewBox="0 0 7 7" className="size-[6.500px] shrink-0">
            <path d="M.5.500h6v6h-6zM2 3.500h3" fill="#fff" stroke="#999" strokeWidth=".8" />
            {node.box === '+' && <path d="M3.500 2v3" stroke="#666" strokeWidth=".8" />}
          </svg>
        ) : (
          <div className="ml-[3px] h-full border-l border-dotted border-[#bbb]" />
        )}
        <div className="w-[4px] border-t border-dotted border-[#bbb]" />
      </div>
      <span className={clsx('-ml-[3px] px-px leading-[10px]', node.selected && 'bg-[#ececec]')}>{node.label}</span>
    </div>
  );
}

const commands = [
  ['marquee', 'Marquee Mode'],
  ['miter', 'Mitered corners'],
  ['mode', 'Mode'],
  ['nonex', 'None'],
  ['accel', 'Object and Color Acce'],
  ['accel2', 'Object and Color Acce'],
  ['offset', 'Offset'],
  ['opacity', 'Opacity'],
  ['options', 'Options'],
  ['outside', 'Outside'],
  ['pathprops', 'Path Properties'],
  ['inside', 'Place Inside Frame...'],
];

function Button({ children, className }: { children: React.ReactNode; className: string }) {
  return (
    <div className={clsx('flex h-[14px] shrink-0 items-center justify-center border bg-linear-to-b from-[#f2f2f2] to-[#e6e6e6]', className)}>{children}</div>
  );
}

function Field({ children, className }: { children?: React.ReactNode; className: string }) {
  return <div className={clsx('flex w-[109px] shrink-0 items-center border bg-white pl-[3px]', className)}>{children}</div>;
}

function CommandList() {
  return (
    <div className="w-[107px] shrink-0">
      <div className="flex justify-between">
        <Select value="Effects" className="h-[14px] w-[89px] bg-linear-to-b from-[#f2f2f2] to-[#e6e6e6]" />
        <div className="flex size-[14px] items-center justify-center border border-[#bbb] bg-[#ececec]"><Icon name="binoculars" /></div>
      </div>
      <div className="mt-[6px] flex h-[188px] flex-col border-t border-l border-[#777] bg-white">
        <div className="flex h-[177px]">
          <div className="relative w-[95px] overflow-hidden">
            {commands.map(([icon, label], i) => (
              <div key={i} className="flex h-[14.700px] items-center whitespace-nowrap">
                <Icon name={icon} className="mr-[9px] ml-[3px] size-[10.500px]" />{label}
              </div>
            ))}
            <div className="absolute right-[3px] bottom-[47px] border-b-2 border-l-2 border-b-black border-l-transparent" />
          </div>
          <div className="flex flex-1 flex-col items-center bg-[#f0f0f0] py-[3px]">
            <Chevron dir="up" />
            <div className="mt-[34px] h-[13px] w-[9px] bg-[#cdcdcd]" />
            <Chevron className="mt-auto" />
          </div>
        </div>
        <div className="flex h-[10px] items-center bg-[#f0f0f0]">
          <Chevron dir="left" className="ml-[2px]" />
          <div className="ml-[3px] h-full w-[42px] bg-[#cdcdcd]" />
          <Chevron dir="right" className="ml-[31px]" />
        </div>
      </div>
    </div>
  );
}

function Group({ title, className, children }: { title: string; className: string; children: React.ReactNode }) {
  return (
    <div className={clsx('relative border border-[#dcdcdc] px-[4px]', className)}>
      <span className="absolute -top-[7px] left-[3px] bg-white px-[2px] leading-[11px]">{title}</span>
      {children}
    </div>
  );
}

function ShortcutPane() {
  return (
    <div className="w-[178px] shrink-0">
      <div className="flex h-[14px] items-end pl-[1px]">
        <div className="flex h-[12px] w-[32px] items-center justify-center border border-b-0 border-[#ccc] bg-[#ededed]">General</div>
        <div className="relative z-10 -mb-px flex h-[15px] w-[55px] items-center justify-center border border-b-0 border-[#ccc] bg-white whitespace-nowrap">Shortcut Keys</div>
        <div className="flex h-[12px] w-[44px] items-center justify-center border border-b-0 border-[#ccc] bg-[#ededed] tracking-[-0.05px]">Appearance</div>
      </div>
      <div className="h-[201px] border border-[#c8c8c8] bg-white pt-[5px] pr-[3px] pl-[5px]">
        <div className="flex items-center justify-between pr-px pl-[2px]">
          <span className="tracking-[0.12px]">Shortcut Key Table:</span>
          <Select value="Main" className="h-[14px] w-[83px] bg-linear-to-b from-[#f2f2f2] to-[#e6e6e6]" />
        </div>
        <Group title="Shortcut Assignment" className="mt-[8px] h-[92px] pt-[8px]">
          <div className="h-[13px] leading-[12px]">New Shortcut Key:</div>
          <div className="flex gap-[5px]">
            <Field className="h-[15px] border-[#6ea7dc]">I<div className="h-[9px] w-px bg-[#888]" /></Field>
            <Button className="w-[43px] border-[#acacac]">Assign</Button>
          </div>
          <div className="mt-[2px] h-[13px] tracking-[-0.08px] leading-[12px]">Currently assigned to:</div>
          <Field className="h-[15px] border-[#bbb]">Artistic Media</Field>
          <div className="mt-[9px] flex items-center gap-px">
            <div className="size-[9px] shrink-0 border border-[#888] bg-white" />
            <span className="tracking-[-0.1px] leading-[9px] whitespace-nowrap">Navigate to conflict on Assign</span>
          </div>
        </Group>
        <Group title="Current Shortcut Keys" className="mt-[6px] h-[50px] pt-[8px]">
          <div className="flex gap-[5px]">
            <Field className="h-[39px] border-[#999]" />
            <Button className="mt-[1px] h-[13px] w-[43px] border-[#dcdcdc] text-[#999]">Delete</Button>
          </div>
        </Group>
        <div className="mt-[6px] flex justify-end gap-[5px]">
          <Button className="w-[49px] border-[#acacac]">Reset All</Button>
          <Button className="w-[49px] border-[#acacac]">View All...</Button>
        </div>
      </div>
    </div>
  );
}

function OptionsDialog() {
  return (
    <div className="absolute top-[214px] left-[428px] h-[318px] w-[424px] border border-[#48c8d0] bg-[#66e9ee] text-[#333]">
      <div className="flex h-[21px] items-start pl-[25px]">
        <div className="flex-1 text-center font-['Open_Sans',sans-serif] text-[9.800px] leading-[20px] text-[#32545a]">Options</div>
        <div className="mr-[4px] flex h-[14px] w-[21px] items-center justify-center bg-[#c75252] text-[8px] leading-none text-white">✕</div>
      </div>
      <div className="ml-[5px] flex h-[291px] w-[412px] flex-col bg-[#f0f0f0] px-[4px] pt-[3px]">
        <div className="flex gap-[4px]">
          <div className="flex h-[259px] w-[101px] flex-col border border-[#bbb] bg-white pl-[5px]">
            {tree.map((n) => <TreeRow key={n.label} node={n} />)}
            <div className="mt-auto -ml-[5px] flex h-[11px] items-center bg-[#f0f0f0]">
              <Chevron dir="left" className="ml-[2px]" />
              <div className="ml-[2px] h-[9px] w-[77px] bg-[#cdcdcd]" />
              <Chevron dir="right" className="ml-[3px]" />
            </div>
          </div>
          <div className="h-[259px] w-[299px] border border-[#bbb] bg-[#fdfdfd] pl-[3px]">
            <div className="h-[21px] pl-px font-['Open_Sans',sans-serif] text-[10.200px] leading-[19px] text-[#2c4b9c]">Commands</div>
            <div className="flex gap-[5px]">
              <CommandList />
              <ShortcutPane />
            </div>
          </div>
        </div>
        <div className="mt-[4px] flex justify-end gap-[4px] border-t border-[#ccc] pt-[5px]">
          <Button className="w-[50px] border-[#5a9bd8]">OK</Button>
          <Button className="w-[50px] border-[#acacac]">Cancel</Button>
          <Button className="w-[50px] border-[#acacac]">Help</Button>
        </div>
      </div>
      <svg viewBox="0 0 6 15" className="absolute top-[112px] left-[262px] h-[16px] w-[6px]">
        <path d="M.5.500h2l.5.500.5-.5h2M3 1v13M.5 14.500h2l.5-.5.5.5h2" fill="none" stroke="#111" strokeWidth="1.200" />
      </svg>
    </div>
  );
}

export default function App() {
  return (
    <div className="relative flex h-[720px] w-[1280px] flex-col overflow-hidden bg-[#f0f0f0] font-['DejaVu_Sans_Condensed','Noto_Sans',sans-serif] text-[7.330px] leading-[10px] text-[#333]">
      <Taskbar />
      <TitleBar />
      <MenuBar />
      <StandardBar />
      <PropertyBar />
      <div className="h-[18px] shrink-0 bg-linear-to-b from-[#f7f7f7] to-[#ededed]" />
      <Workspace />
      <StatusBar />
      <OptionsDialog />
    </div>
  );
}
